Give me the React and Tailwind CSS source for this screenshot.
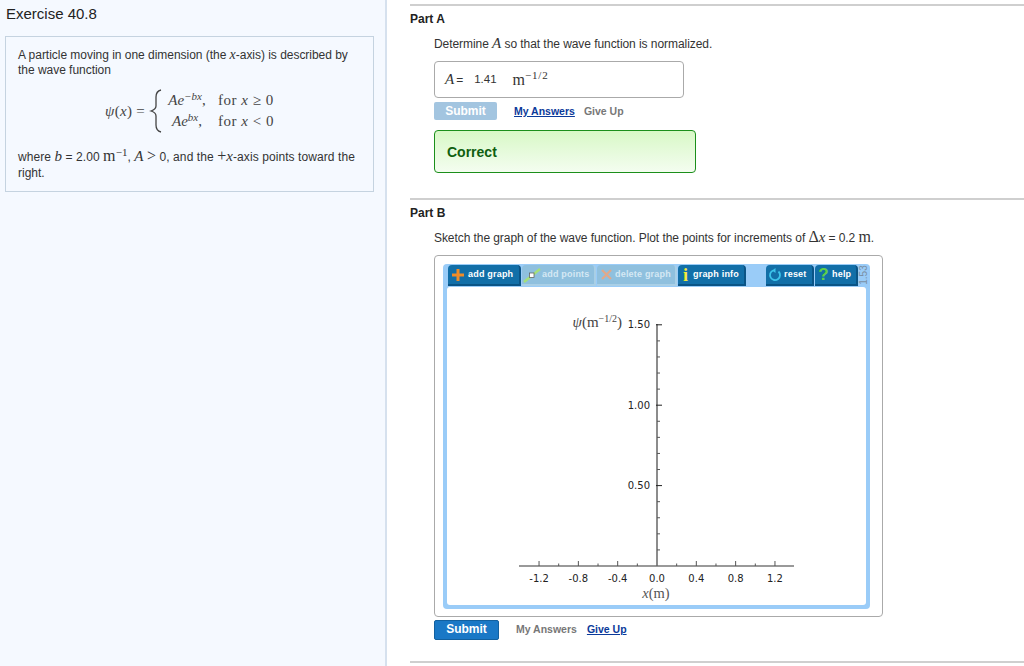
const sans = { fontFamily: '"Liberation Sans", Arial, sans-serif' };
function M({ children, i = false, className = "" }) {
  return <span className={`font-['Liberation_Serif',serif] ${i ? "italic" : ""} ${className}`}>{children}</span>;
}
function ToolBtn({ icon, label, dim = false, w, iw = "w-[20px]" }) {
  return (
    <div className={`flex items-center h-[21px] rounded-t-[4px] border-r-2 border-b-2 ${w} ${dim ? "bg-[#8fc0de] border-[#a9cfe6] text-[#d5e8f4]" : "bg-[#126fa8] border-[#0a5486] text-white"}`}>
      <span className={`${iw} h-[19px] flex items-center justify-center shrink-0`}>{icon}</span>
      <span className="text-[9px] font-bold tracking-[0.2px] whitespace-nowrap">{label}</span>
    </div>
  );
}
function Graph() {
  const x0 = 210, y0 = 279, ux = 98.3, uy = 160.8;
  const xt = [];
  for (let k = -6; k <= 6; k++) xt.push(k);
  const yt = [];
  for (let k = 1; k <= 15; k++) yt.push(k);
  const font = { fontFamily: '"DejaVu Sans", sans-serif', fontSize: 10, fill: "#222" };
  return (
    <svg width="419" height="318" className="block">
      <line x1="72" x2="347" y1={y0} y2={y0} stroke="#777" strokeWidth="1.5" />
      <line x1={x0} x2={x0} y1="37" y2={y0} stroke="#666" strokeWidth="1.5" />
      {xt.filter((k) => k !== 0).map((k) => (
        <line key={k} x1={x0 + (k * ux) / 5} x2={x0 + (k * ux) / 5} y1={y0} y2={k % 2 === 0 ? y0 - 5 : y0 - 2.5} stroke="#555" />
      ))}
      {yt.map((k) => (
        <line key={k} x1={k % 5 === 0 ? x0 - 1 : x0} x2={k % 5 === 0 ? x0 + 5 : x0 + 3} y1={y0 - (k * uy) / 10} y2={y0 - (k * uy) / 10} stroke={k % 5 === 0 ? "#222" : "#555"} />
      ))}
      {[[-1.2, "-1.2"], [-0.8, "-0.8"], [-0.4, "-0.4"], [0, "0.0"], [0.4, "0.4"], [0.8, "0.8"], [1.2, "1.2"]].map(([v, t]) => (
        <text key={t} x={x0 + v * ux} y="295" textAnchor="middle" style={font}>{t}</text>
      ))}
      {[["1.50", 41], ["1.00", 122], ["0.50", 202]].map(([t, y]) => (
        <text key={t} x="203" y={y} textAnchor="end" style={font}>{t}</text>
      ))}
      <text x="209" y="311" textAnchor="middle" style={{ fontFamily: '"Liberation Serif", serif', fontSize: 14.5, fill: "#555" }}>
        <tspan fontStyle="italic">x</tspan>(m)
      </text>
      <text x="175" y="40" textAnchor="end" style={{ fontFamily: '"Liberation Serif", serif', fontSize: 15, fill: "#444" }}>
        <tspan fontStyle="italic">ψ</tspan>(m<tspan fontSize="10" dy="-5">−1/2</tspan><tspan dy="5">)</tspan>
      </text>
    </svg>
  );
}
export default function App() {
  return (
    <div className="flex w-[1024px] h-[666px] overflow-hidden bg-white text-[#333]" style={sans}>
      <aside className="w-[387px] shrink-0 bg-[#f5f9ff] border-r-2 border-[#d6e1ee] pl-[5px] pt-[5px]">
        <h1 className="text-[15px] leading-[18px] font-normal text-[#222] ml-[1px]">Exercise 40.8</h1>
        <div className="mt-[13px] w-[369px] h-[156px] border border-[#c5d3e0] pt-[11px] pl-[12px] text-[12px] leading-[15px]">
          <p className="tracking-[-0.03px]">A particle moving in one dimension (the <M i className="text-[14px] leading-none">x</M>-axis) is described by<br />the wave function</p>
          <div className="flex items-center mt-[10px] ml-[87px] h-[46px] text-[#444] text-[15px]">
            <M className="whitespace-nowrap tracking-[0.3px]"><M i>ψ</M>(<M i>x</M>) =</M>
            <svg width="14" height="44" viewBox="0 0 14 44" className="shrink-0 ml-[4px]">
              <path d="M12 1C8 2 7 4 7 8V17C7 20 5 21 2 22C5 23 7 24 7 27V36C7 40 8 42 12 43" fill="none" stroke="#444" strokeWidth="1.3" />
            </svg>
            <div className="grid grid-cols-[55px_auto] gap-y-[4px] leading-[17px]">
              <M className="text-center pr-[7px] whitespace-nowrap"><M i>Ae</M><sup className="text-[11px] leading-none"><M i>−bx</M></sup>,</M>
              <M className="tracking-[0.5px]">for <M i>x</M> ≥ 0</M>
              <M className="text-center pr-[7px] whitespace-nowrap"><M i>Ae</M><sup className="text-[11px] leading-none"><M i>bx</M></sup>,</M>
              <M className="tracking-[0.5px]">for <M i>x</M> &lt; 0</M>
            </div>
          </div>
          <p className="mt-[14px] tracking-[0.08px]">
            where <M i className="text-[15px] leading-none">b</M> = 2.00 <M className="text-[16px] leading-none">m<sup className="text-[11px] leading-none">−1</sup></M>, <M i className="text-[15px] leading-none">A</M> <M className="text-[16px] leading-none">&gt;</M> 0, and the <M className="text-[16px] leading-none">+</M><M i className="text-[15px] leading-none">x</M>-axis points toward the
          </p>
          <p className="mt-[1px]">right.</p>
        </div>
      </aside>
      <main className="flex-1 pl-[23px] pt-[4px] text-[12px]">
        <div className="h-[2px] bg-[#cfcfcf]" />
        <h2 className="mt-[6px] font-bold text-[12px] leading-[14px] text-[#222]">Part A</h2>
        <section className="ml-[24px]">
          <p className="mt-[10px] leading-[15px] text-[#333] tracking-[-0.06px]">Determine <M i className="text-[15px] leading-none">A</M> so that the wave function is normalized.</p>
          <div className="mt-[9px] w-[250px] h-[37px] border border-[#aaa] rounded-[4px] flex items-center pl-[10px]">
            <M i className="text-[15px]">A</M><span className="ml-[2px]">=</span><span className="ml-[11px] text-[11.5px]">1.41</span>
            <M className="ml-[16px] text-[16px]">m<sup className="text-[11px] leading-none tracking-[0.8px]">−1/2</sup></M>
          </div>
          <div className="mt-[4px] flex items-center h-[18px]">
            <div className="w-[63px] h-[18px] rounded-[2px] bg-[#a3c5e0] text-white font-bold text-center leading-[18px]">Submit</div>
            <a className="ml-[17px] mt-[2px] text-[#0b3a9a] font-bold text-[10.5px] underline">My Answers</a>
            <span className="ml-[9px] mt-[2px] text-[#777] font-bold text-[10.5px]">Give Up</span>
          </div>
          <div className="mt-[10px] w-[262px] h-[43px] rounded-[4px] border border-[#1b8f1b] bg-gradient-to-b from-[#d8f8c6] to-[#f4fdf0] flex items-center pl-[12px] pt-[1px] text-[#0f5f0f] font-bold text-[14px]">Correct</div>
        </section>
        <div className="mt-[25px] h-[2px] bg-[#cfcfcf]" />
        <h2 className="mt-[6px] font-bold text-[12px] leading-[14px] text-[#222]">Part B</h2>
        <section className="ml-[24px]">
          <p className="mt-[9px] leading-[15px] text-[#333] tracking-[-0.07px] whitespace-nowrap">Sketch the graph of the wave function. Plot the points for increments of <M className="text-[16px] leading-none">Δ</M><M i className="text-[15px] leading-none">x</M> = 0.2 <M className="text-[16px] leading-none">m</M>.</p>
          <div className="mt-[9px] w-[449px] h-[362px] border border-[#aaa] rounded-[4px] pl-[8px] pt-[8px]">
            <div className="w-[427px] h-[345px] bg-[#9accf8] rounded-[4px] px-[4px] pt-[1px] pb-[4px] flex flex-col">
              <div className="flex h-[21px] gap-[1px] ml-[1px] text-white">
                <ToolBtn w="w-[73px]" label="add graph" icon={<svg width="14" height="14" viewBox="0 0 14 14"><path d="M7 1v12M1 7h12" stroke="#f08c28" strokeWidth="3" /></svg>} />
                <ToolBtn dim w="w-[74px]" label="add points" icon={<svg width="18" height="16" viewBox="0 0 18 16"><path d="M1 15L17 2" stroke="#a5e07a" strokeWidth="2.5" /><rect x="6.5" y="6" width="4.5" height="4.5" fill="#fff" stroke="#555" strokeWidth="0.7" /></svg>} />
                <ToolBtn dim w="w-[80px]" iw="w-[18px]" label="delete graph" icon={<svg width="13" height="13" viewBox="0 0 13 13"><path d="M2 2l9 9M11 2l-9 9" stroke="#e0a88a" strokeWidth="2.2" /></svg>} />
                <ToolBtn w="w-[68px]" iw="w-[15px]" label="graph info" icon={<span className="font-['Liberation_Serif',serif] font-bold text-[#f4ea3a] text-[18px] leading-none">i</span>} />
                <div className="w-[18px]" />
                <ToolBtn w="w-[48px]" iw="w-[18px]" label="reset" icon={<svg width="14" height="14" viewBox="0 0 14 14"><path d="M5 2.5A5 5 0 1 0 10.5 3.5" fill="none" stroke="#3cc3ea" strokeWidth="1.8" /><path d="M7.5 0L4 2.5L7.5 5Z" fill="#3cc3ea" /></svg>} />
                <ToolBtn w="w-[43px]" iw="w-[17px]" label="help" icon={<span className="font-bold text-[#5fd04a] text-[17px] leading-none">?</span>} />
                <div className="relative flex-1">
                  <span className="absolute left-[-5px] top-[5px] -rotate-90 text-[10px] leading-[10px] text-[#7a90a5]">1.53</span>
                </div>
              </div>
              <div className="flex-1 mt-[1px] bg-white rounded-[3px] overflow-hidden"><Graph /></div>
            </div>
          </div>
          <div className="mt-[3px] flex items-center h-[20px]">
            <div className="w-[65px] h-[20px] rounded-[2px] bg-[#1a78c6] border border-[#12609f] text-white font-bold text-center leading-[16px]">Submit</div>
            <span className="ml-[17px] text-[#777] font-bold text-[10.5px]">My Answers</span>
            <a className="ml-[10px] text-[#0b3a9a] font-bold text-[10.5px] underline">Give Up</a>
          </div>
        </section>
        <div className="mt-[21px] h-[2px] bg-[#cfcfcf]" />
      </main>
    </div>
  );
}
